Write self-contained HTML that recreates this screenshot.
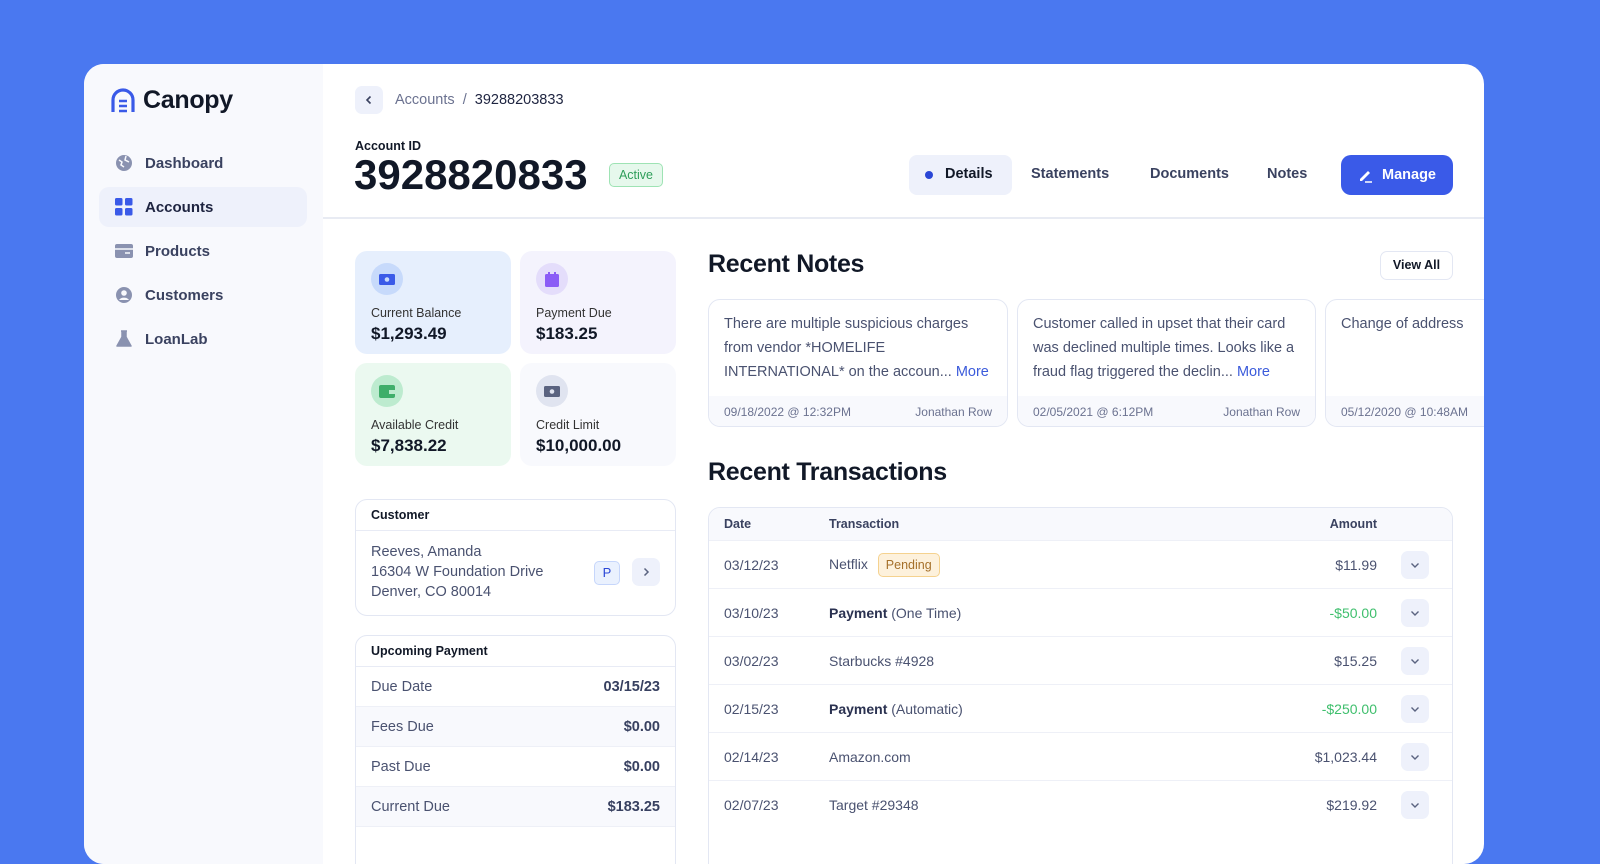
<!DOCTYPE html>
<html><head><meta charset="utf-8"><style>
*{box-sizing:border-box;margin:0;padding:0}
body{width:1600px;height:827px;overflow:hidden;background:#4a78f0;font-family:"Liberation Sans",sans-serif;color:#111827;position:relative}
.card{position:absolute;left:84px;top:64px;width:1400px;height:800px;background:#fff;border-radius:20px;overflow:hidden}
.side{position:absolute;left:0;top:0;width:239px;height:100%;background:#f8f9fd}
.a{position:absolute}
.nav{position:absolute;left:15px;width:208px;height:40px;border-radius:10px;display:flex;align-items:center;padding-left:16px;font-size:15px;font-weight:bold;color:#3a4260}
.nav svg{margin-right:12px}
.stat{position:absolute;width:156px;height:103px;border-radius:12px;padding:12px 16px}
.stat .ic{width:32px;height:32px;border-radius:50%;display:flex;align-items:center;justify-content:center}
.stat .l{font-size:12.5px;color:#333;margin-top:11px}
.stat .v{font-size:17px;font-weight:bold;margin-top:4px}
.box{position:absolute;border:1.5px solid #e3e7f3;border-radius:12px;overflow:hidden}
.bh{height:31px;border-bottom:1.5px solid #e8ebf5;font-size:12.5px;font-weight:bold;padding:8px 15px}
.pr{height:40px;display:flex;justify-content:space-between;align-items:center;padding:0 15px;font-size:14.5px;color:#4a5270;border-bottom:1px solid #eef0f7}
.pr b{color:#374060}
.note{position:absolute;top:235px;height:128px;border:1.5px solid #e3e7f3;border-radius:12px;overflow:hidden;background:#fff}
.note .t{padding:12px 15px;font-size:14.5px;line-height:24px;color:#4a5270;height:96px}
.note .f{background:#f8f9fd;height:32px;display:flex;justify-content:space-between;align-items:center;padding:0 15px;font-size:12px;color:#6b7290;white-space:nowrap}
.more{color:#3b5bdb}
.tr{height:48px;display:flex;align-items:center;font-size:14px;color:#4a5270;border-top:1.5px solid #eef0f7;position:relative}
.tr .d{width:120px;padding-left:15px}
.tr .n{flex:1}
.tr .m{width:120px;text-align:right}
.tr .c{width:75px;display:flex;justify-content:center}
.chev{width:28px;height:28px;border-radius:7px;background:#eef1fb;display:flex;align-items:center;justify-content:center}
.g{color:#3fbf6d}
</style></head><body>
<div class="card">
<div class="side">
 <div class="a" style="left:26px;top:22px;display:flex;align-items:center">
  <svg width="26" height="26" viewBox="0 0 26 26"><path d="M3 24V12a10 10 0 0 1 20 0v12" fill="none" stroke="#3a5ae8" stroke-width="3.2"/><path d="M9 13h8M9 18h8M9 23h8" stroke="#3a5ae8" stroke-width="2.6"/></svg>
  <span style="font-size:25px;font-weight:bold;margin-left:7px;color:#111827;letter-spacing:-0.3px">Canopy</span>
 </div>
 <div class="nav" style="top:79px"><svg width="18" height="18" viewBox="0 0 18 18"><circle cx="9" cy="9" r="8" fill="#8a92b0"/><path d="M4 6l3 2-1 3 3 2M11 2l-1 4 4 2" stroke="#f8f9fd" stroke-width="1.5" fill="none"/></svg>Dashboard</div>
 <div class="nav" style="top:123px;background:#eef1fb;color:#1e2440"><svg width="18" height="18" viewBox="0 0 18 18" fill="#3a5ae8"><rect x="0" y="0" width="7.5" height="7.5" rx="1.5"/><rect x="10" y="0" width="7.5" height="7.5" rx="1.5"/><rect x="0" y="10" width="7.5" height="7.5" rx="1.5"/><rect x="10" y="10" width="7.5" height="7.5" rx="1.5"/></svg>Accounts</div>
 <div class="nav" style="top:167px"><svg width="18" height="18" viewBox="0 0 18 18"><rect x="0" y="2" width="18" height="14" rx="2" fill="#8a92b0"/><path d="M0 7h18M10 11h5" stroke="#f8f9fd" stroke-width="1.6"/></svg>Products</div>
 <div class="nav" style="top:211px"><svg width="18" height="18" viewBox="0 0 18 18"><circle cx="9" cy="9" r="8" fill="#8a92b0"/><circle cx="9" cy="7" r="2.8" fill="#f8f9fd"/><path d="M4 14a5.5 4 0 0 1 10 0" fill="#f8f9fd"/></svg>Customers</div>
 <div class="nav" style="top:255px"><svg width="18" height="18" viewBox="0 0 18 18"><path d="M6 1h6M7 1v6l-5 9h14l-5-9V1" fill="#8a92b0" stroke="#8a92b0" stroke-width="1.5" stroke-linejoin="round"/></svg>LoanLab</div>
</div>

<div class="a" style="left:271px;top:22px;width:28px;height:28px;border-radius:7px;background:#eef1fb;display:flex;align-items:center;justify-content:center"><svg width="10" height="10" viewBox="0 0 10 10"><path d="M6.5 1.5L3 5l3.5 3.5" stroke="#3a4260" stroke-width="1.6" fill="none"/></svg></div>
<div class="a" style="left:311px;top:28px;font-size:14.5px;color:#6b7290">Accounts &nbsp;/&nbsp; <span style="color:#1e2440">39288203833</span></div>
<div class="a" style="left:271px;top:75px;font-size:12.5px;font-weight:bold">Account ID</div>
<div class="a" style="left:270px;top:88px;font-size:42px;font-weight:bold;line-height:46px">3928820833</div>
<div class="a" style="left:525px;top:99px;width:54px;height:24px;border:1px solid #9ee3b4;background:#e6f8ec;border-radius:5px;color:#2f9e5a;font-size:12.5px;text-align:center;line-height:22px">Active</div>
<div class="a" style="left:825px;top:91px;width:103px;height:40px;border-radius:8px;background:#eef1fb"></div>
<div class="a" style="left:841px;top:107px;width:8px;height:8px;border-radius:50%;background:#2a46d6"></div>
<div class="a" style="left:861px;top:102px;font-size:14.5px;font-weight:bold;color:#111827">Details</div>
<div class="a" style="left:947px;top:102px;font-size:14.5px;font-weight:bold;color:#3a4260">Statements</div>
<div class="a" style="left:1066px;top:102px;font-size:14.5px;font-weight:bold;color:#3a4260">Documents</div>
<div class="a" style="left:1183px;top:102px;font-size:14.5px;font-weight:bold;color:#3a4260">Notes</div>
<div class="a" style="left:1257px;top:91px;width:112px;height:40px;border-radius:10px;background:#3a5ae8;color:#fff;font-size:14.5px;font-weight:bold;display:flex;align-items:center;justify-content:center"><svg width="15" height="15" viewBox="0 0 15 15" style="margin-right:9px"><path d="M2 11l8-8 2 2-8 8H2z" fill="#fff"/><path d="M7 14h7" stroke="#fff" stroke-width="1.5"/></svg>Manage</div>
<div class="a" style="left:239px;top:153px;width:1161px;height:2px;background:#e8ebf3"></div>

<div class="stat" style="left:271px;top:187px;background:#e6effd"><div class="ic" style="background:#c7dafb"><svg width="16" height="11" viewBox="0 0 16 11"><rect width="16" height="11" rx="1.5" fill="#3a5ae8"/><circle cx="8" cy="5.5" r="2.3" fill="#c7dafb"/></svg></div><div class="l">Current Balance</div><div class="v">$1,293.49</div></div>
<div class="stat" style="left:436px;top:187px;background:#f4f3fd"><div class="ic" style="background:#e4ddfb"><svg width="14" height="15" viewBox="0 0 14 15"><rect y="2" width="14" height="13" rx="1.5" fill="#8b5cf6"/><rect x="3" width="2" height="4" fill="#8b5cf6"/><rect x="9" width="2" height="4" fill="#8b5cf6"/></svg></div><div class="l">Payment Due</div><div class="v">$183.25</div></div>
<div class="stat" style="left:271px;top:299px;background:#ebf9f0"><div class="ic" style="background:#bdebcf"><svg width="16" height="13" viewBox="0 0 16 13"><rect width="16" height="13" rx="2" fill="#3fae6a"/><rect x="10" y="5" width="6" height="4" fill="#bdebcf"/></svg></div><div class="l">Available Credit</div><div class="v">$7,838.22</div></div>
<div class="stat" style="left:436px;top:299px;background:#f8f9fd"><div class="ic" style="background:#e0e4f0"><svg width="16" height="11" viewBox="0 0 16 11"><rect width="16" height="11" rx="1.5" fill="#5a6380"/><circle cx="8" cy="5.5" r="2.3" fill="#e0e4f0"/></svg></div><div class="l">Credit Limit</div><div class="v">$10,000.00</div></div>

<div class="box" style="left:271px;top:435px;width:321px;height:117px">
 <div class="bh">Customer</div>
 <div style="padding:11px 15px;font-size:14.5px;line-height:20px;color:#4a5270">Reeves, Amanda<br>16304 W Foundation Drive<br>Denver, CO 80014</div>
 <div class="a" style="left:238px;top:61px;width:26px;height:24px;border:1px solid #c6d6fb;background:#eaf1fe;border-radius:5px;color:#2a46d6;font-size:13px;text-align:center;line-height:22px">P</div>
 <div class="a" style="left:276px;top:58px;width:28px;height:28px;border-radius:7px;background:#eef1fb;display:flex;align-items:center;justify-content:center"><svg width="10" height="10" viewBox="0 0 10 10"><path d="M3.5 1.5L7 5 3.5 8.5" stroke="#5a6380" stroke-width="1.5" fill="none"/></svg></div>
</div>
<div class="box" style="left:271px;top:571px;width:321px;height:260px">
 <div class="bh">Upcoming Payment</div>
 <div class="pr"><span>Due Date</span><b>03/15/23</b></div>
 <div class="pr" style="background:#f8f9fd"><span>Fees Due</span><b>$0.00</b></div>
 <div class="pr"><span>Past Due</span><b>$0.00</b></div>
 <div class="pr" style="background:#f8f9fd"><span>Current Due</span><b>$183.25</b></div>
</div>

<div class="a" style="left:624px;top:186px;font-size:25px;font-weight:bold;letter-spacing:-0.3px">Recent Notes</div>
<div class="a" style="left:1296px;top:187px;width:73px;height:29px;border:1.5px solid #e3e7f3;border-radius:7px;font-size:12.5px;font-weight:bold;text-align:center;line-height:26px">View All</div>
<div class="note" style="left:624px;width:300px"><div class="t">There are multiple suspicious charges from vendor *HOMELIFE INTERNATIONAL* on the accoun... <span class="more">More</span></div><div class="f"><span>09/18/2022 @ 12:32PM</span><span>Jonathan Row</span></div></div>
<div class="note" style="left:933px;width:299px"><div class="t">Customer called in upset that their card was declined multiple times. Looks like a fraud flag triggered the declin... <span class="more">More</span></div><div class="f"><span>02/05/2021 @ 6:12PM</span><span>Jonathan Row</span></div></div>
<div class="note" style="left:1241px;width:200px"><div class="t">Change of address</div><div class="f"><span>05/12/2020 @ 10:48AM</span><span></span></div></div>

<div class="a" style="left:624px;top:394px;font-size:25px;font-weight:bold;letter-spacing:-0.3px">Recent Transactions</div>
<div class="box" style="left:624px;top:443px;width:745px;height:400px">
 <div style="height:32px;background:#f8f9fd;display:flex;align-items:center;font-size:12.5px;font-weight:bold;color:#3a4260"><div style="width:120px;padding-left:15px">Date</div><div style="flex:1">Transaction</div><div style="width:120px;text-align:right">Amount</div><div style="width:75px"></div></div>
 <div class="tr"><div class="d">03/12/23</div><div class="n">Netflix <span style="display:inline-block;margin-left:6px;border:1px solid #f5d28f;background:#fdf1dc;color:#a5702a;font-size:12.5px;border-radius:5px;padding:4px 7px">Pending</span></div><div class="m">$11.99</div><div class="c"><div class="chev"><svg width="10" height="10" viewBox="0 0 10 10"><path d="M1.5 3.5L5 7l3.5-3.5" stroke="#5a6380" stroke-width="1.4" fill="none"/></svg></div></div></div>
 <div class="tr"><div class="d">03/10/23</div><div class="n"><b style="color:#2a3150">Payment</b> (One Time)</div><div class="m g">-$50.00</div><div class="c"><div class="chev"><svg width="10" height="10" viewBox="0 0 10 10"><path d="M1.5 3.5L5 7l3.5-3.5" stroke="#5a6380" stroke-width="1.4" fill="none"/></svg></div></div></div>
 <div class="tr"><div class="d">03/02/23</div><div class="n">Starbucks #4928</div><div class="m">$15.25</div><div class="c"><div class="chev"><svg width="10" height="10" viewBox="0 0 10 10"><path d="M1.5 3.5L5 7l3.5-3.5" stroke="#5a6380" stroke-width="1.4" fill="none"/></svg></div></div></div>
 <div class="tr"><div class="d">02/15/23</div><div class="n"><b style="color:#2a3150">Payment</b> (Automatic)</div><div class="m g">-$250.00</div><div class="c"><div class="chev"><svg width="10" height="10" viewBox="0 0 10 10"><path d="M1.5 3.5L5 7l3.5-3.5" stroke="#5a6380" stroke-width="1.4" fill="none"/></svg></div></div></div>
 <div class="tr"><div class="d">02/14/23</div><div class="n">Amazon.com</div><div class="m">$1,023.44</div><div class="c"><div class="chev"><svg width="10" height="10" viewBox="0 0 10 10"><path d="M1.5 3.5L5 7l3.5-3.5" stroke="#5a6380" stroke-width="1.4" fill="none"/></svg></div></div></div>
 <div class="tr"><div class="d">02/07/23</div><div class="n">Target #29348</div><div class="m">$219.92</div><div class="c"><div class="chev"><svg width="10" height="10" viewBox="0 0 10 10"><path d="M1.5 3.5L5 7l3.5-3.5" stroke="#5a6380" stroke-width="1.4" fill="none"/></svg></div></div></div>
</div>
</div>
</body></html>
